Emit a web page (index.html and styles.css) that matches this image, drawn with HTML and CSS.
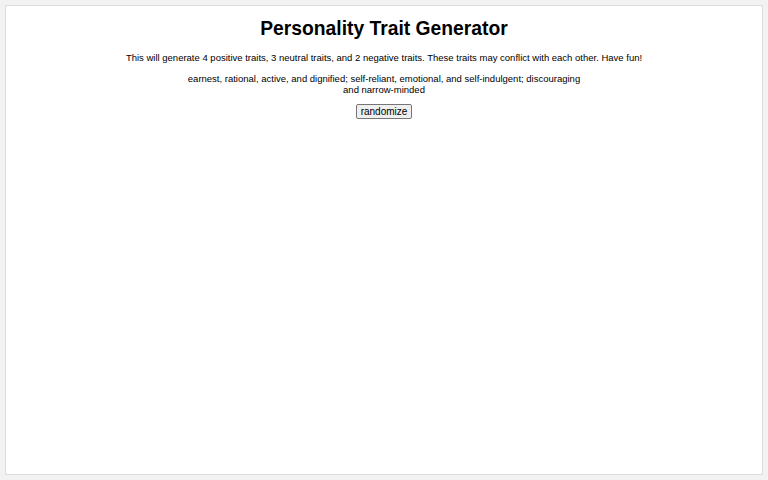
FILE: index.html
```html
<!DOCTYPE html>
<html lang="en">
<head>
    <meta charset="UTF-8">
    <meta name="viewport" content="width=device-width, initial-scale=1.0">
    <title>Personality Trait Generator</title>
    <link rel="stylesheet" href="styles.css">
</head>
<body>
    <div class="card">
        <h1>Personality Trait Generator</h1>
        <p class="intro">This will generate 4 positive traits, 3 neutral traits, and 2 negative traits. These traits may conflict with each other. Have fun!</p>
        <p id="traits" class="traits">earnest, rational, active, and dignified; self-reliant, emotional, and self-indulgent; discouraging and narrow-minded</p>
        <button id="randomizeBtn" class="randomize">randomize</button>
    </div>
</body>
</html>
```

FILE: styles.css
```css
body {
    margin: 0;
    padding: 5px;
    font-family: "Liberation Sans", Arial, sans-serif;
    background-color: #f2f2f2;
    height: 100vh;
    box-sizing: border-box;
}
.card {
    height: 100%;
    box-sizing: border-box;
    background-color: #fff;
    border: 1px solid #dcdcdc;
    display: flex;
    flex-direction: column;
    align-items: center;
    padding-top: 12px;
    color: #000;
}
h1 {
    margin: 0 0 12px;
    font-size: 19.3px;
    font-weight: bold;
}
.intro {
    margin: 0 0 10px;
    font-size: 9.5px;
    text-align: center;
}
.traits {
    margin: 0 0 9px;
    max-width: 400px;
    font-size: 9.5px;
    line-height: 11px;
    text-align: center;
}
.randomize {
    font-family: "Liberation Sans", Arial, sans-serif;
    font-size: 10px;
    padding: 1px 4px;
    background-color: #efefef;
    border: 1px solid #767676;
    border-radius: 2px;
    color: #000;
    cursor: pointer;
}
```
